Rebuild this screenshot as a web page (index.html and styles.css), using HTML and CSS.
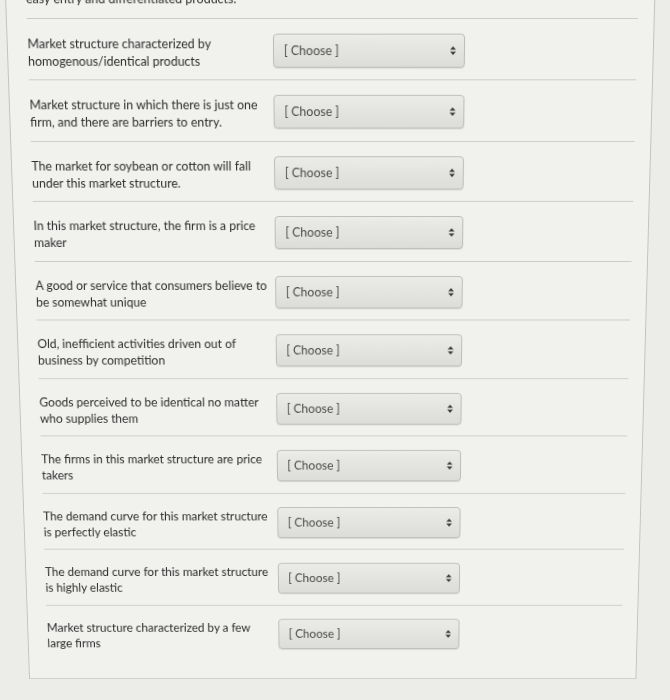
FILE: index.html
```html
<!DOCTYPE html>
<html lang="en">
<head>
    <meta charset="UTF-8">
    <meta name="viewport" content="width=device-width, initial-scale=1.0">
    <title>Matching Question</title>
    <link rel="stylesheet" href="styles.css">
</head>
<body>
    <div class="page">
        <div class="quiz-card">
            <div class="match-row">
                <div class="prompt">Market structure characterized by many firms, with relatively<br>easy entry and differentiated products.</div>
                <div class="select-box"><span>[ Choose ]</span><svg class="arrows" width="6" height="9" viewBox="0 0 6 9"><path d="M3 0L6 3.6H0Z M3 9L6 5.4H0Z" fill="#3c3c3c"/></svg></div>
            </div>
            <div class="match-row">
                <div class="prompt">Market structure characterized by homogenous/identical products</div>
                <div class="select-box"><span>[ Choose ]</span><svg class="arrows" width="6" height="9" viewBox="0 0 6 9"><path d="M3 0L6 3.6H0Z M3 9L6 5.4H0Z" fill="#3c3c3c"/></svg></div>
            </div>
            <div class="match-row">
                <div class="prompt">Market structure in which there is just one firm, and there are barriers to entry.</div>
                <div class="select-box"><span>[ Choose ]</span><svg class="arrows" width="6" height="9" viewBox="0 0 6 9"><path d="M3 0L6 3.6H0Z M3 9L6 5.4H0Z" fill="#3c3c3c"/></svg></div>
            </div>
            <div class="match-row">
                <div class="prompt">The market for soybean or cotton will fall under this market structure.</div>
                <div class="select-box"><span>[ Choose ]</span><svg class="arrows" width="6" height="9" viewBox="0 0 6 9"><path d="M3 0L6 3.6H0Z M3 9L6 5.4H0Z" fill="#3c3c3c"/></svg></div>
            </div>
            <div class="match-row">
                <div class="prompt">In this market structure, the firm is a price maker</div>
                <div class="select-box"><span>[ Choose ]</span><svg class="arrows" width="6" height="9" viewBox="0 0 6 9"><path d="M3 0L6 3.6H0Z M3 9L6 5.4H0Z" fill="#3c3c3c"/></svg></div>
            </div>
            <div class="match-row">
                <div class="prompt">A good or service that consumers believe to be somewhat unique</div>
                <div class="select-box"><span>[ Choose ]</span><svg class="arrows" width="6" height="9" viewBox="0 0 6 9"><path d="M3 0L6 3.6H0Z M3 9L6 5.4H0Z" fill="#3c3c3c"/></svg></div>
            </div>
            <div class="match-row">
                <div class="prompt">Old, inefficient activities driven out of business by competition</div>
                <div class="select-box"><span>[ Choose ]</span><svg class="arrows" width="6" height="9" viewBox="0 0 6 9"><path d="M3 0L6 3.6H0Z M3 9L6 5.4H0Z" fill="#3c3c3c"/></svg></div>
            </div>
            <div class="match-row">
                <div class="prompt">Goods perceived to be identical no matter who supplies them</div>
                <div class="select-box"><span>[ Choose ]</span><svg class="arrows" width="6" height="9" viewBox="0 0 6 9"><path d="M3 0L6 3.6H0Z M3 9L6 5.4H0Z" fill="#3c3c3c"/></svg></div>
            </div>
            <div class="match-row">
                <div class="prompt">The firms in this market structure are price takers</div>
                <div class="select-box"><span>[ Choose ]</span><svg class="arrows" width="6" height="9" viewBox="0 0 6 9"><path d="M3 0L6 3.6H0Z M3 9L6 5.4H0Z" fill="#3c3c3c"/></svg></div>
            </div>
            <div class="match-row">
                <div class="prompt">The demand curve for this market structure is perfectly elastic</div>
                <div class="select-box"><span>[ Choose ]</span><svg class="arrows" width="6" height="9" viewBox="0 0 6 9"><path d="M3 0L6 3.6H0Z M3 9L6 5.4H0Z" fill="#3c3c3c"/></svg></div>
            </div>
            <div class="match-row">
                <div class="prompt">The demand curve for this market structure is highly elastic</div>
                <div class="select-box"><span>[ Choose ]</span><svg class="arrows" width="6" height="9" viewBox="0 0 6 9"><path d="M3 0L6 3.6H0Z M3 9L6 5.4H0Z" fill="#3c3c3c"/></svg></div>
            </div>
            <div class="match-row">
                <div class="prompt">Market structure characterized by a few large firms</div>
                <div class="select-box"><span>[ Choose ]</span><svg class="arrows" width="6" height="9" viewBox="0 0 6 9"><path d="M3 0L6 3.6H0Z M3 9L6 5.4H0Z" fill="#3c3c3c"/></svg></div>
            </div>
        </div>
    </div>
</body>
</html>
```

FILE: styles.css
```css
body {
    margin: 0;
    background-color: #ecece9;
    font-family: 'Lato', 'Open Sans', sans-serif;
    color: #2e2e2e;
    overflow: hidden;
    height: 700px;
}

/* the screenshot is a photo, tilted away from the camera at the bottom */
.page {
    width: 670px;
    transform-origin: 368px 0;
    transform: perspective(1000px) rotateX(-5.5deg);
}

.quiz-card {
    margin: -63px 0 0 3px;
    width: 652px;
    background-color: #f1f1ee;
    border: 1px solid #c2c2bf;
    padding-bottom: 22px;
}

.match-row {
    display: flex;
    align-items: flex-start;
    margin: 0 16px 0 20px;
    padding: 15px 0 9.5px 0;
    border-bottom: 1px solid #cbcbc8;
}

.match-row:last-child {
    border-bottom: none;
}

.prompt {
    width: 243px;
    margin-right: 5px;
    padding-top: 2px;
    font-size: 12.5px;
    line-height: 18px;
}

.select-box {
    box-sizing: border-box;
    width: 194px;
    height: 35px;
    display: flex;
    align-items: center;
    justify-content: space-between;
    padding: 0 8px 0 10px;
    border: 1px solid #bcbcb9;
    border-radius: 4px;
    background: linear-gradient(#ebebe8, #dcdcd9);
    box-shadow: 0 1px 1px rgba(0, 0, 0, 0.1);
    font-size: 12.5px;
    color: #4a4a4a;
}

.arrows {
    display: block;
}
```
